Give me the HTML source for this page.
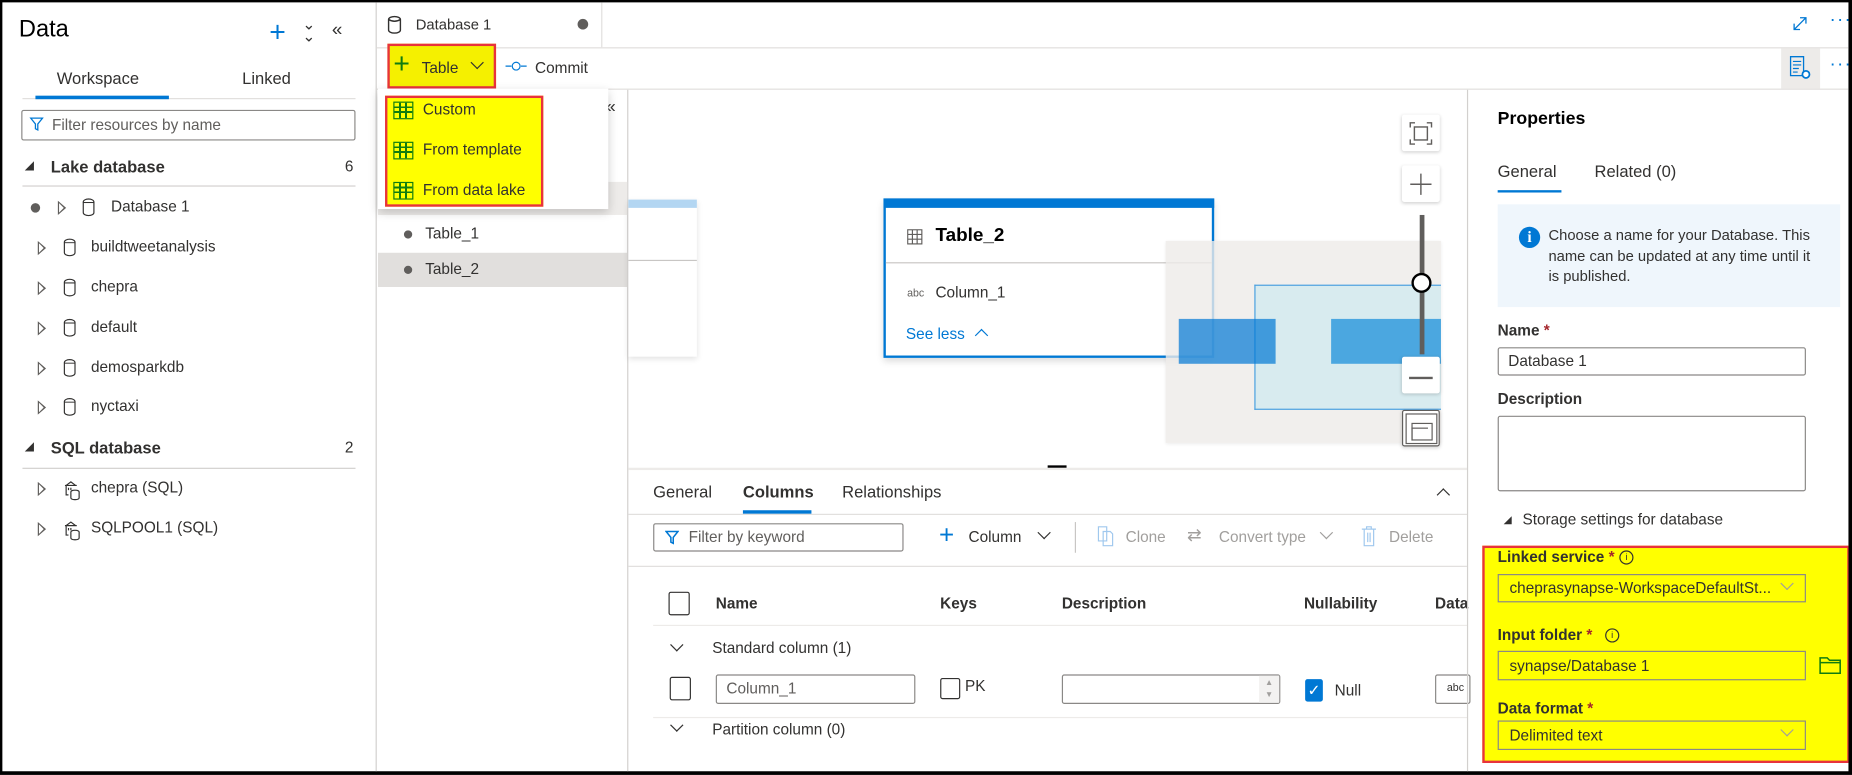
<!DOCTYPE html>
<html><head><meta charset="utf-8"><style>
*{box-sizing:border-box;margin:0;padding:0}
html,body{width:1852px;height:775px;overflow:hidden;background:#000}
#s{position:absolute;left:0;top:0;width:1568px;height:656px;transform:scale(1.18112);transform-origin:0 0;background:#fff;font-family:"Liberation Sans",sans-serif;font-size:13px;color:#323130;border:2px solid #000;border-right:3px solid #000;border-bottom:3px solid #000;overflow:hidden}
.a{position:absolute;white-space:nowrap}
.t{line-height:18px}
.ln{position:absolute;background:#e1dfdd}
.cyl{position:absolute;width:10px;height:15px;border:1.3px solid #323130;border-radius:5px/3px}
.cyl:before{content:"";position:absolute;left:-1px;right:-1px;top:2px;height:0;border-top:1.3px solid #323130;border-radius:0 0 5px 5px}
.tri{position:absolute;width:0;height:0;border-top:6px solid transparent;border-bottom:6px solid transparent;border-left:7px solid #605e5c}
.tri:after{content:"";position:absolute;left:-6px;top:-4px;border-top:4px solid transparent;border-bottom:4px solid transparent;border-left:4px solid #fff}
.dot{position:absolute;width:8px;height:8px;border-radius:50%;background:#605e5c}
.box{position:absolute;border:1px solid #8a8886;border-radius:2px;background:#fff}
.cb{position:absolute;width:18px;height:20px;border:1px solid #323130;border-radius:2px}
.grid{position:absolute;width:17px;height:15px;border:1.5px solid #107c10;background:
linear-gradient(90deg,transparent 4px,#107c10 4px,#107c10 5.5px,transparent 5.5px,transparent 9px,#107c10 9px,#107c10 10.5px,transparent 10.5px),
linear-gradient(180deg,transparent 3px,#107c10 3px,#107c10 4.5px,transparent 4.5px,transparent 7px,#107c10 7px,#107c10 8.5px,transparent 8.5px);}
.btn{position:absolute;width:32px;height:31px;background:#fff;box-shadow:0 1px 3px rgba(0,0,0,.18);border-radius:2px}
.red{position:absolute;border:2px solid #e8323c;background:#ffff00}
.chev{position:absolute;width:8px;height:8px;border-right:1.3px solid #323130;border-bottom:1.3px solid #323130;transform:rotate(45deg)}
.sec{position:absolute;font-size:10px;line-height:10px;color:#323130}
</style></head><body><div id="s">

<!-- LEFT PANEL -->
<div class="a" style="left:14px;top:12px;font-size:20px;color:#000">Data</div>
<div class="a" style="left:226px;top:14px;font-size:24px;color:#0078d4;font-weight:300;line-height:24px">+</div>
<div class="a" style="left:254px;top:14px;font-size:13px;line-height:10px;color:#323130">⌄<br>⌄</div>
<div class="a" style="left:279px;top:15px;font-size:16px;color:#323130">«</div>
<div class="a t" style="left:46px;top:55px;font-size:14px;color:#323130">Workspace</div>
<div class="a t" style="left:203px;top:55px;font-size:14px;color:#323130">Linked</div>
<div class="ln" style="left:17px;top:81px;width:282px;height:1px"></div>
<div class="a" style="left:28px;top:79px;width:113px;height:3px;background:#0078d4"></div>
<div class="box" style="left:16px;top:91px;width:283px;height:26px"></div>
<svg class="a" style="left:23px;top:97px" width="12" height="12"><path d="M1 1h10L7 6v5L5 10V6z" fill="none" stroke="#0078d4" stroke-width="1.1"/></svg>
<div class="a t" style="left:42px;top:95px;color:#605e5c">Filter resources by name</div>

<div class="sec" style="left:19px;top:134px">◢</div>
<div class="a t" style="left:41px;top:130px;font-size:14px;font-weight:bold;color:#323130">Lake database</div>
<div class="a t" style="left:290px;top:130px">6</div>
<div class="ln" style="left:17px;top:155px;width:282px;height:1px;background:#d2d0ce"></div>

<div class="dot" style="left:24px;top:170px"></div>
<div class="tri" style="left:47px;top:168px"></div>
<div class="cyl" style="left:68px;top:166px"></div>
<div class="a t" style="left:92px;top:164px">Database 1</div>

<div class="tri" style="left:30px;top:202px"></div><div class="cyl" style="left:52px;top:200px"></div><div class="a t" style="left:75px;top:198px">buildtweetanalysis</div>
<div class="tri" style="left:30px;top:236px"></div><div class="cyl" style="left:52px;top:234px"></div><div class="a t" style="left:75px;top:232px">chepra</div>
<div class="tri" style="left:30px;top:270px"></div><div class="cyl" style="left:52px;top:268px"></div><div class="a t" style="left:75px;top:266px">default</div>
<div class="tri" style="left:30px;top:304px"></div><div class="cyl" style="left:52px;top:302px"></div><div class="a t" style="left:75px;top:300px">demosparkdb</div>
<div class="tri" style="left:30px;top:337px"></div><div class="cyl" style="left:52px;top:335px"></div><div class="a t" style="left:75px;top:333px">nyctaxi</div>

<div class="sec" style="left:19px;top:372px">◢</div>
<div class="a t" style="left:41px;top:368px;font-size:14px;font-weight:bold">SQL database</div>
<div class="a t" style="left:290px;top:368px">2</div>
<div class="ln" style="left:17px;top:394px;width:282px;height:1px;background:#d2d0ce"></div>
<div class="tri" style="left:30px;top:406px"></div>
<svg class="a" style="left:50px;top:404px" width="18" height="18"><path d="M4 5l4-3 4 3M3 5h10M4 5v8h2M6 7v2M8 7v2" stroke="#323130" fill="none" stroke-width="1"/><rect x="8" y="9" width="7" height="8" rx="3" ry="1.5" fill="#fff" stroke="#323130"/></svg>
<div class="a t" style="left:75px;top:402px">chepra (SQL)</div>
<div class="tri" style="left:30px;top:440px"></div>
<svg class="a" style="left:50px;top:438px" width="18" height="18"><path d="M4 5l4-3 4 3M3 5h10M4 5v8h2M6 7v2M8 7v2" stroke="#323130" fill="none" stroke-width="1"/><rect x="8" y="9" width="7" height="8" rx="3" ry="1.5" fill="#fff" stroke="#323130"/></svg>
<div class="a t" style="left:75px;top:436px">SQLPOOL1 (SQL)</div>

<div class="ln" style="left:316px;top:0;width:1px;height:656px;background:#d2d0ce"></div>

<!-- TOP TAB BAR -->
<div class="ln" style="left:317px;top:38px;width:1251px;height:1px"></div>
<div class="ln" style="left:507px;top:0;width:1px;height:38px"></div>
<svg class="a" style="left:326px;top:11px" width="12" height="16"><rect x="1" y="1" width="10" height="14" rx="5" ry="2.5" fill="none" stroke="#323130" stroke-width="1.2"/><path d="M1 3.5q5 3 10 0" fill="none" stroke="#323130" stroke-width="1.2"/></svg>
<div class="a t" style="left:350px;top:10px;font-size:12.5px">Database 1</div>
<div class="dot" style="left:487px;top:14px;width:9px;height:9px"></div>
<svg class="a" style="left:1515px;top:11px" width="14" height="14"><path d="M2 12L12 2M7 2h5v5M2 7v5h5" fill="none" stroke="#0078d4" stroke-width="1.1"/></svg>
<div class="a" style="left:1547px;top:6px;color:#0078d4;font-size:16px;letter-spacing:1px">···</div>

<!-- TOOLBAR -->
<div class="ln" style="left:317px;top:73px;width:1251px;height:1px"></div>
<div class="red" style="left:326px;top:35px;width:92px;height:38px;background:#f5f000"></div>
<div class="a" style="left:331px;top:38px;font-size:24px;font-weight:300;color:#107c10;line-height:30px">+</div>
<div class="a t" style="left:355px;top:47px;color:#323130">Table</div>
<div class="chev" style="left:398px;top:47px"></div>
<svg class="a" style="left:426px;top:50px" width="18" height="8"><path d="M0 4h5M13 4h5" stroke="#0078d4"/><circle cx="9" cy="4" r="3.3" fill="none" stroke="#0078d4"/></svg>
<div class="a t" style="left:451px;top:47px">Commit</div>
<div class="a" style="left:1506px;top:39px;width:33px;height:34px;background:#edebe9"></div>
<svg class="a" style="left:1513px;top:45px" width="20" height="22"><path d="M1 1h11v16H1z" fill="none" stroke="#0078d4" stroke-width="1.1"/><path d="M3 5h7M3 8h7M3 11h5M3 14h4" stroke="#0078d4"/><circle cx="14" cy="16" r="3" fill="#fff" stroke="#0078d4" stroke-width="1.5"/></svg>
<div class="a" style="left:1547px;top:44px;color:#0078d4;font-size:16px;letter-spacing:1px">···</div>

<!-- TREE PANE -->
<div class="ln" style="left:529px;top:74px;width:1px;height:582px;background:#d2d0ce"></div>
<div class="a" style="left:511px;top:80px;font-size:15px">«</div>
<div class="a" style="left:318px;top:152px;width:211px;height:28px;background:#edebe9"></div>
<div class="dot" style="left:340px;top:193px;width:7px;height:7px"></div>
<div class="a t" style="left:358px;top:187px">Table_1</div>
<div class="a" style="left:318px;top:212px;width:211px;height:29px;background:#e1dfdd"></div>
<div class="dot" style="left:340px;top:223px;width:7px;height:7px"></div>
<div class="a t" style="left:358px;top:217px">Table_2</div>

<!-- DROPDOWN MENU -->
<div class="a" style="left:318px;top:73px;width:195px;height:102px;background:#fff;box-shadow:0 3px 8px rgba(0,0,0,.2)"></div>
<div class="red" style="left:324px;top:79px;width:134px;height:94px"></div>
<div class="grid" style="left:331px;top:84px"></div><div class="a t" style="left:356px;top:82px">Custom</div>
<div class="grid" style="left:331px;top:118px"></div><div class="a t" style="left:356px;top:116px">From template</div>
<div class="grid" style="left:331px;top:152px"></div><div class="a t" style="left:356px;top:150px">From data lake</div>

<!-- CANVAS -->
<div class="a" style="left:530px;top:167px;width:58px;height:133px;background:#fff;box-shadow:0 2px 5px rgba(0,0,0,.12)"></div>
<div class="a" style="left:530px;top:167px;width:58px;height:7px;background:#b3d6f2"></div>
<div class="ln" style="left:530px;top:218px;width:58px;height:1px;background:#c8c6c4"></div>

<div class="a" style="left:746px;top:166px;width:280px;height:135px;border:2px solid #0078d4;background:#fff;box-shadow:0 3px 6px rgba(0,0,0,.15)"></div>
<div class="a" style="left:746px;top:166px;width:280px;height:8px;background:#0078d4"></div>
<svg class="a" style="left:766px;top:192px" width="13" height="13"><rect x=".5" y=".5" width="12" height="12" fill="none" stroke="#605e5c"/><path d="M.5 4.5h12M.5 8.5h12M4.5 .5v12M8.5 .5v12" stroke="#605e5c"/></svg>
<div class="a t" style="left:790px;top:189px;font-size:16px;font-weight:bold;color:#000">Table_2</div>
<div class="ln" style="left:748px;top:220px;width:276px;height:1px;background:#c8c6c4"></div>
<div class="a t" style="left:766px;top:237px;font-size:9px;color:#605e5c">abc</div>
<div class="a t" style="left:790px;top:237px">Column_1</div>
<div class="a t" style="left:765px;top:272px;color:#0078d4">See less</div>
<div class="chev" style="left:825px;top:278px;border-color:#0078d4;transform:rotate(225deg)"></div>

<!-- minimap -->
<div class="a" style="left:985px;top:202px;width:233px;height:171px;background:rgba(237,235,233,.8);box-shadow:0 1px 3px rgba(0,0,0,.08)"></div>
<div class="a" style="left:1060px;top:239px;width:158px;height:106px;background:rgba(200,232,240,.6);border:1px solid #4aa0e0;border-right:none"></div>
<div class="a" style="left:996px;top:268px;width:82px;height:38px;background:rgba(0,120,212,.7)"></div>
<div class="a" style="left:1125px;top:268px;width:93px;height:38px;background:rgba(40,150,220,.8)"></div>

<div class="btn" style="left:1185px;top:95px"></div>
<svg class="a" style="left:1191px;top:101px" width="20" height="20"><path d="M1 5V1h4M15 1h4v4M19 15v4h-4M5 19H1v-4" fill="none" stroke="#605e5c" stroke-width="1.2"/><rect x="4.5" y="4.5" width="11" height="11" fill="none" stroke="#605e5c" stroke-width="1.2"/></svg>
<div class="btn" style="left:1185px;top:138px"></div>
<svg class="a" style="left:1191px;top:144px" width="20" height="20"><path d="M10 1v18M1 10h18" stroke="#605e5c" stroke-width="1.2"/></svg>
<div class="a" style="left:1200px;top:180px;width:4px;height:118px;background:#605e5c"></div>
<div class="a" style="left:1193px;top:229px;width:17px;height:17px;border-radius:50%;background:#fff;border:2px solid #000"></div>
<div class="btn" style="left:1185px;top:300px"></div>
<div class="a" style="left:1191px;top:317px;width:20px;height:1.5px;background:#605e5c"></div>
<div class="btn" style="left:1185px;top:345px;border:1px solid #605e5c"></div>
<div class="a" style="left:1188px;top:348px;width:27px;height:26px;border:1px solid #605e5c"></div>
<div class="a" style="left:1193px;top:360px;width:14px;height:11px;border:1px solid #605e5c;border-right:0;border-bottom:0"></div>
<div class="a" style="left:1193px;top:356px;width:18px;height:15px;border:1px solid #605e5c"></div>

<!-- BOTTOM PANEL -->
<div class="a" style="left:530px;top:394px;width:710px;height:2px;background:#edebe9"></div>
<div class="a" style="left:885px;top:392px;width:16px;height:2px;background:#000"></div>
<div class="a t" style="left:551px;top:405px;font-size:14px">General</div>
<div class="a t" style="left:627px;top:405px;font-size:14px;font-weight:bold">Columns</div>
<div class="a" style="left:627px;top:430px;width:58px;height:3px;background:#0078d4"></div>
<div class="a t" style="left:711px;top:405px;font-size:14px">Relationships</div>
<div class="chev" style="left:1216px;top:413px;transform:rotate(225deg)"></div>
<div class="ln" style="left:530px;top:433px;width:710px;height:1px"></div>
<div class="box" style="left:551px;top:441px;width:212px;height:24px"></div>
<svg class="a" style="left:561px;top:447px" width="12" height="12"><path d="M1 1h10L7 6v5L5 10V6z" fill="none" stroke="#0078d4" stroke-width="1.3"/></svg>
<div class="a t" style="left:581px;top:444px;color:#605e5c">Filter by keyword</div>
<div class="a" style="left:793px;top:437px;font-size:22px;font-weight:300;color:#0078d4;line-height:28px">+</div>
<div class="a t" style="left:818px;top:444px">Column</div>
<div class="chev" style="left:878px;top:445px"></div>
<div class="ln" style="left:908px;top:440px;width:1px;height:26px;background:#c8c6c4"></div>
<svg class="a" style="left:927px;top:443px" width="14" height="18"><path d="M1 1h7v12H1z M5 5h6l2 2v10H5z" fill="none" stroke="#a0c8ee"/></svg>
<div class="a t" style="left:951px;top:444px;color:#a19f9d">Clone</div>
<div class="a" style="left:1003px;top:442px;color:#a19f9d;font-size:15px">⇄</div>
<div class="a t" style="left:1030px;top:444px;color:#a19f9d">Convert type</div>
<div class="chev" style="left:1117px;top:445px;border-color:#a19f9d"></div>
<svg class="a" style="left:1150px;top:443px" width="14" height="18"><path d="M1 3h12M5 3V1h4v2M3 3v14h8V3M6 6v8M8 6v8" fill="none" stroke="#a0c8ee"/></svg>
<div class="a t" style="left:1174px;top:444px;color:#a19f9d">Delete</div>
<div class="ln" style="left:530px;top:477px;width:710px;height:1px"></div>

<div class="cb" style="left:564px;top:499px"></div>
<div class="a t" style="left:604px;top:500px;font-weight:bold;color:#323130">Name</div>
<div class="a t" style="left:794px;top:500px;font-weight:bold">Keys</div>
<div class="a t" style="left:897px;top:500px;font-weight:bold">Description</div>
<div class="a t" style="left:1102px;top:500px;font-weight:bold">Nullability</div>
<div class="a t" style="left:1213px;top:500px;font-weight:bold">Data</div>
<div class="ln" style="left:551px;top:527px;width:689px;height:1px;background:#edebe9"></div>
<div class="chev" style="left:567px;top:540px"></div>
<div class="a t" style="left:601px;top:538px">Standard column (1)</div>
<div class="cb" style="left:565px;top:571px"></div>
<div class="box" style="left:604px;top:569px;width:169px;height:25px"></div>
<div class="a t" style="left:613px;top:572px;color:#605e5c">Column_1</div>
<div class="cb" style="left:794px;top:572px;width:17px;height:18px"></div>
<div class="a t" style="left:815px;top:570px">PK</div>
<div class="box" style="left:897px;top:569px;width:185px;height:25px"></div>
<div class="a" style="left:1064px;top:570px;width:17px;height:23px;background:#f3f2f1;font-size:7px;color:#a19f9d;text-align:center;line-height:10px;padding-top:2px">▲<br>▼</div>
<div class="a" style="left:1103px;top:573px;width:15px;height:19px;background:#0078d4;border-radius:2px;color:#fff;font-size:13px;text-align:center;line-height:19px">✓</div>
<div class="a t" style="left:1128px;top:574px">Null</div>
<div class="box" style="left:1213px;top:569px;width:30px;height:25px"></div>
<div class="a" style="left:1223px;top:575px;font-size:9px">abc</div>
<div class="ln" style="left:551px;top:605px;width:689px;height:1px;background:#edebe9"></div>
<div class="chev" style="left:567px;top:608px"></div>
<div class="a t" style="left:601px;top:607px">Partition column (0)</div>

<!-- PROPERTIES -->
<div class="ln" style="left:1240px;top:74px;width:1px;height:582px;background:#d2d0ce"></div>
<div class="a t" style="left:1266px;top:90px;font-size:15px;font-weight:bold;color:#000">Properties</div>
<div class="a t" style="left:1266px;top:134px;font-size:14px">General</div>
<div class="a" style="left:1266px;top:159px;width:54px;height:2px;background:#0078d4"></div>
<div class="a t" style="left:1348px;top:134px;font-size:14px">Related (0)</div>
<div class="a" style="left:1266px;top:171px;width:290px;height:87px;background:#eff6fc"></div>
<div class="a" style="left:1284px;top:190px;width:18px;height:18px;border-radius:50%;background:#0078d4;color:#fff;font-weight:bold;font-size:13px;text-align:center;line-height:18px;font-family:'Liberation Serif',serif">i</div>
<div class="a" style="left:1309px;top:189px;line-height:17.5px;font-size:12.5px;white-space:normal;width:226px">Choose a name for your Database. This name can be updated at any time until it is published.</div>
<div class="a t" style="left:1266px;top:269px;font-weight:bold">Name <span style="color:#a4262c">*</span></div>
<div class="box" style="left:1266px;top:292px;width:261px;height:24px"></div>
<div class="a t" style="left:1275px;top:295px">Database 1</div>
<div class="a t" style="left:1266px;top:327px;font-weight:bold">Description</div>
<div class="box" style="left:1266px;top:350px;width:261px;height:64px"></div>
<div class="sec" style="left:1271px;top:433px;font-size:9px">◢</div>
<div class="a t" style="left:1287px;top:429px">Storage settings for database</div>

<div class="red" style="left:1253px;top:460px;width:311px;height:184px"></div>
<div class="a t" style="left:1266px;top:461px;font-weight:bold">Linked service <span style="color:#a4262c">*</span></div>
<div class="a" style="left:1369px;top:464px;width:12px;height:12px;border:1px solid #323130;border-radius:50%;font-size:8px;text-align:center;line-height:10px">i</div>
<div class="a" style="left:1266px;top:484px;width:261px;height:24px;border:1px solid #8a8886"></div>
<div class="a t" style="left:1276px;top:487px">cheprasynapse-WorkspaceDefaultSt...</div>
<div class="chev" style="left:1507px;top:488px;border-color:#a19f9d"></div>
<div class="a t" style="left:1266px;top:527px;font-weight:bold">Input folder <span style="color:#a4262c">*</span></div>
<div class="a" style="left:1357px;top:530px;width:12px;height:12px;border:1px solid #323130;border-radius:50%;font-size:8px;text-align:center;line-height:10px">i</div>
<div class="a" style="left:1266px;top:549px;width:261px;height:25px;border:1px solid #8a8886"></div>
<div class="a t" style="left:1276px;top:553px">synapse/Database 1</div>
<svg class="a" style="left:1538px;top:554px" width="20" height="15"><path d="M1 1h6l2 2h9v11H1z M1 5h17" fill="none" stroke="#107c10" stroke-width="1.3"/></svg>
<div class="a t" style="left:1266px;top:589px;font-weight:bold">Data format <span style="color:#a4262c">*</span></div>
<div class="a" style="left:1266px;top:608px;width:261px;height:25px;border:1px solid #8a8886"></div>
<div class="a t" style="left:1276px;top:612px">Delimited text</div>
<div class="chev" style="left:1507px;top:612px;border-color:#a19f9d"></div>

</div></body></html>
